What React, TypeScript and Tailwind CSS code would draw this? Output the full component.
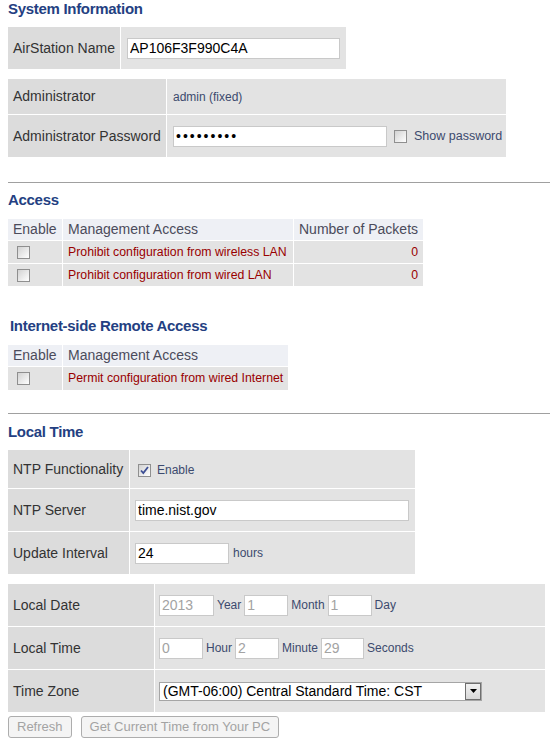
import React from 'react';

const font = "font-['Liberation_Sans',Arial,sans-serif]";
const titleCls = 'text-[15px] font-bold leading-[18px] tracking-[-0.3px] text-[#243f82]';
const labelCls = 'flex items-center bg-[#dcdcdc] pl-[5px] text-[14px] text-[#333]';
const valueCls = 'flex items-center bg-[#e3e3e3]';
const noteCls = 'text-[12px] text-[#3c4a6e]';
const inputCls = 'h-[21px] border border-[#c9c9c9] bg-white px-[2px] text-[14px] text-black outline-none';
const dimInputCls = 'h-[21px] border border-[#c9c9c9] bg-white px-[2px] text-[14px] text-[#a3a3a3] outline-none';
const headCls = 'flex items-center bg-[#eef0f5] pl-[5px] text-[14px] text-[#4b4b5b]';
const rowCls = 'flex items-center bg-[#e3e3e3] text-[12.3px] text-[#990000]';
const btnCls = 'h-[22px] rounded-[3px] border border-[#adadad] bg-[#f4f4f4] px-[8px] text-[13px] text-[#a3a3a3]';

const Box: React.FC<{ checked?: boolean }> = ({ checked }) => (
    <span className="inline-flex h-[13px] w-[13px] shrink-0 items-center justify-center border border-[#8f8f8f] bg-linear-to-br from-[#d2d2d2] to-[#ffffff]">
        {checked && (
            <svg width="11" height="11" viewBox="0 0 11 11">
                <path d="M2 5.5 L4.3 8 L9 2" fill="none" stroke="#3d4f94" strokeWidth="1.8" />
            </svg>
        )}
    </span>
);

const Hr = ({ className }: { className: string }) => <div className={`h-px bg-[#a0a0a0] ${className}`} />;

const App: React.FC = () => {
    return (
        <div className={`min-h-[741px] w-[550px] bg-white pl-2 ${font}`}>
            {/* system information */}
            <h2 className={titleCls}>System Information</h2>
            <div className="mt-[9px] grid w-[338px] grid-cols-[112px_225px] gap-px bg-white">
                <div className={`${labelCls} h-[42px]`}>AirStation Name</div>
                <div className={`${valueCls} pl-[6px]`}>
                    <input className={`${inputCls} w-[213px]`} defaultValue="AP106F3F990C4A" />
                </div>
            </div>
            <div className="mt-[10px] grid w-[498px] grid-cols-[158px_339px] gap-px bg-white">
                <div className={`${labelCls} h-[35px]`}>Administrator</div>
                <div className={`${valueCls} pl-[6px]`}>
                    <span className={noteCls}>admin (fixed)</span>
                </div>
                <div className={`${labelCls} h-[42px]`}>Administrator Password</div>
                <div className={`${valueCls} pl-[6px]`}>
                    <input
                        type="password"
                        className={`${inputCls} w-[214px] tracking-[2px]`}
                        defaultValue="password1"
                    />
                    <span className="ml-[7px] flex items-center gap-[7px]">
                        <Box />
                        <span className="text-[12.5px] text-[#3c4a6e]">Show password</span>
                    </span>
                </div>
            </div>

            <Hr className="mt-[25px]" />

            {/* access */}
            <h2 className={`${titleCls} mt-[8px]`}>Access</h2>
            <div className="mt-[10px] grid w-[415px] grid-cols-[54px_230px_129px] gap-px bg-white">
                <div className={`${headCls} h-[21px]`}>Enable</div>
                <div className={headCls}>Management Access</div>
                <div className={headCls}>Number of Packets</div>

                <div className={`${rowCls} h-[22px] pl-[9px]`}><Box /></div>
                <div className={`${rowCls} pl-[5px]`}>Prohibit configuration from wireless LAN</div>
                <div className={`${rowCls} justify-end pr-[5px]`}>0</div>

                <div className={`${rowCls} h-[22px] pl-[9px]`}><Box /></div>
                <div className={`${rowCls} pl-[5px]`}>Prohibit configuration from wired LAN</div>
                <div className={`${rowCls} justify-end pr-[5px]`}>0</div>
            </div>

            <h2 className={`${titleCls} mt-[31px] pl-[2px]`}>Internet-side Remote Access</h2>
            <div className="mt-[10px] grid w-[280px] grid-cols-[54px_225px] gap-px bg-white">
                <div className={`${headCls} h-[21px]`}>Enable</div>
                <div className={headCls}>Management Access</div>
                <div className={`${rowCls} h-[23px] pl-[9px]`}><Box /></div>
                <div className={`${rowCls} pl-[5px]`}>Permit configuration from wired Internet</div>
            </div>

            <Hr className="mt-[23px]" />

            {/* local time */}
            <h2 className={`${titleCls} mt-[9px]`}>Local Time</h2>
            <div className="mt-[9px] grid w-[407px] grid-cols-[121px_285px] gap-px bg-white">
                <div className={`${labelCls} h-[38px]`}>NTP Functionality</div>
                <div className={`${valueCls} gap-[6px] pl-[8px] pt-[2px]`}>
                    <Box checked />
                    <span className={noteCls}>Enable</span>
                </div>
                <div className={`${labelCls} h-[42px]`}>NTP Server</div>
                <div className={`${valueCls} pl-[5px]`}>
                    <input className={`${inputCls} w-[274px]`} defaultValue="time.nist.gov" />
                </div>
                <div className={`${labelCls} h-[42px]`}>Update Interval</div>
                <div className={`${valueCls} gap-[4px] pl-[5px]`}>
                    <input className={`${inputCls} w-[94px]`} defaultValue="24" />
                    <span className={noteCls}>hours</span>
                </div>
            </div>

            <div className="mt-[10px] grid w-[537px] grid-cols-[146px_390px] gap-px bg-white">
                <div className={`${labelCls} h-[42px]`}>Local Date</div>
                <div className={`${valueCls} gap-[3px] pl-[4px]`}>
                    <input disabled className={`${dimInputCls} w-[55px]`} defaultValue="2013" />
                    <span className={noteCls}>Year</span>
                    <input disabled className={`${dimInputCls} w-[44px]`} defaultValue="1" />
                    <span className={noteCls}>Month</span>
                    <input disabled className={`${dimInputCls} w-[44px]`} defaultValue="1" />
                    <span className={noteCls}>Day</span>
                </div>
                <div className={`${labelCls} h-[42px]`}>Local Time</div>
                <div className={`${valueCls} gap-[3px] pl-[4px]`}>
                    <input disabled className={`${dimInputCls} w-[44px]`} defaultValue="0" />
                    <span className={noteCls}>Hour</span>
                    <input disabled className={`${dimInputCls} w-[44px]`} defaultValue="2" />
                    <span className={noteCls}>Minute</span>
                    <input disabled className={`${dimInputCls} w-[43px]`} defaultValue="29" />
                    <span className={noteCls}>Seconds</span>
                </div>
                <div className={`${labelCls} h-[42px]`}>Time Zone</div>
                <div className={`${valueCls} pl-[4px]`}>
                    <div className="flex h-[19px] w-[323px] items-stretch border border-[#a5a5a5] bg-white">
                        <span className="flex flex-1 items-center pl-[3px] text-[14px] text-black">
                            (GMT-06:00) Central Standard Time: CST
                        </span>
                        <span className="flex w-[16px] items-center justify-center border border-[#6f6f6f] bg-linear-to-b from-[#f2f2f2] to-[#d8d8d8]">
                            <svg width="7" height="4" viewBox="0 0 7 4">
                                <path d="M0 0 H7 L3.5 4 Z" fill="#000" />
                            </svg>
                        </span>
                    </div>
                </div>
            </div>

            <div className="mt-[4px] flex gap-[9px]">
                <button disabled className={btnCls}>Refresh</button>
                <button disabled className={btnCls}>Get Current Time from Your PC</button>
            </div>
        </div>
    );
};

export default App;
